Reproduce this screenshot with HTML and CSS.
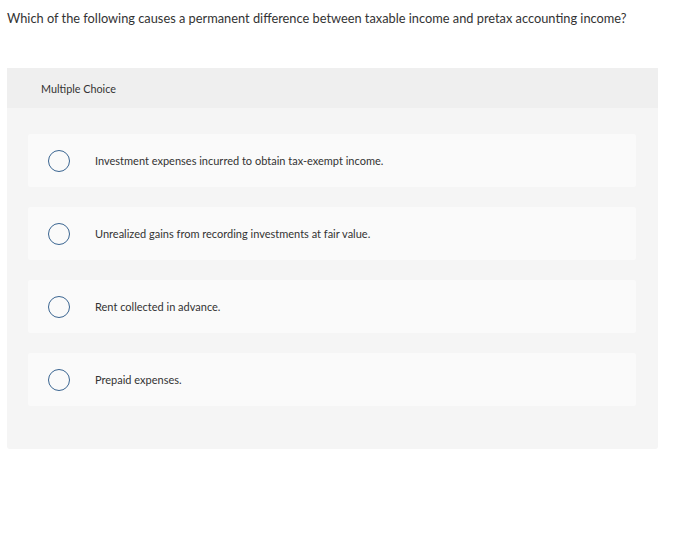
FILE: index.html
```html
<!DOCTYPE html>
<html>
<head>
<meta charset="utf-8">
<link rel="stylesheet" href="styles.css">
</head>
<body>
<p class="question">Which of the following causes a permanent difference between taxable income and pretax accounting income?</p>
<div class="panel">
  <div class="panel-head">Multiple Choice</div>
  <div class="options">
    <div class="option"><span class="radio"></span><span class="label">Investment expenses incurred to obtain tax-exempt income.</span></div>
    <div class="option"><span class="radio"></span><span class="label">Unrealized gains from recording investments at fair value.</span></div>
    <div class="option"><span class="radio"></span><span class="label">Rent collected in advance.</span></div>
    <div class="option"><span class="radio"></span><span class="label">Prepaid expenses.</span></div>
  </div>
</div>
</body>
</html>
```

FILE: styles.css
```css
html, body { margin: 0; padding: 0; background: #fff; }
body {
  font-family: Lato, "Open Sans", sans-serif;
  color: #333;
  padding: 0 15px 0 7px;
}
.question {
  margin: 0;
  padding-top: 10px;
  font-size: 12.8px;
  line-height: 16px;
  height: 58px;
}
.panel {
  background: #f5f5f5;
  border-radius: 0 0 3px 3px;
  width: 651px;
}
.panel-head {
  background: #efefef;
  height: 40px;
  display: flex;
  align-items: center;
  padding-left: 34px;
  font-size: 10.8px;
}
.options {
  padding: 26px 22px 43px 21px;
  display: flex;
  flex-direction: column;
  gap: 20px;
}
.option {
  background: #fafafa;
  border-radius: 2px;
  height: 53px;
  display: flex;
  align-items: center;
  padding-left: 20px;
}
.radio {
  width: 20px;
  height: 20px;
  border: 1.5px solid #3a6591;
  border-radius: 50%;
  flex: none;
}
.label {
  margin-left: 25px;
  font-size: 11px;
}
```
